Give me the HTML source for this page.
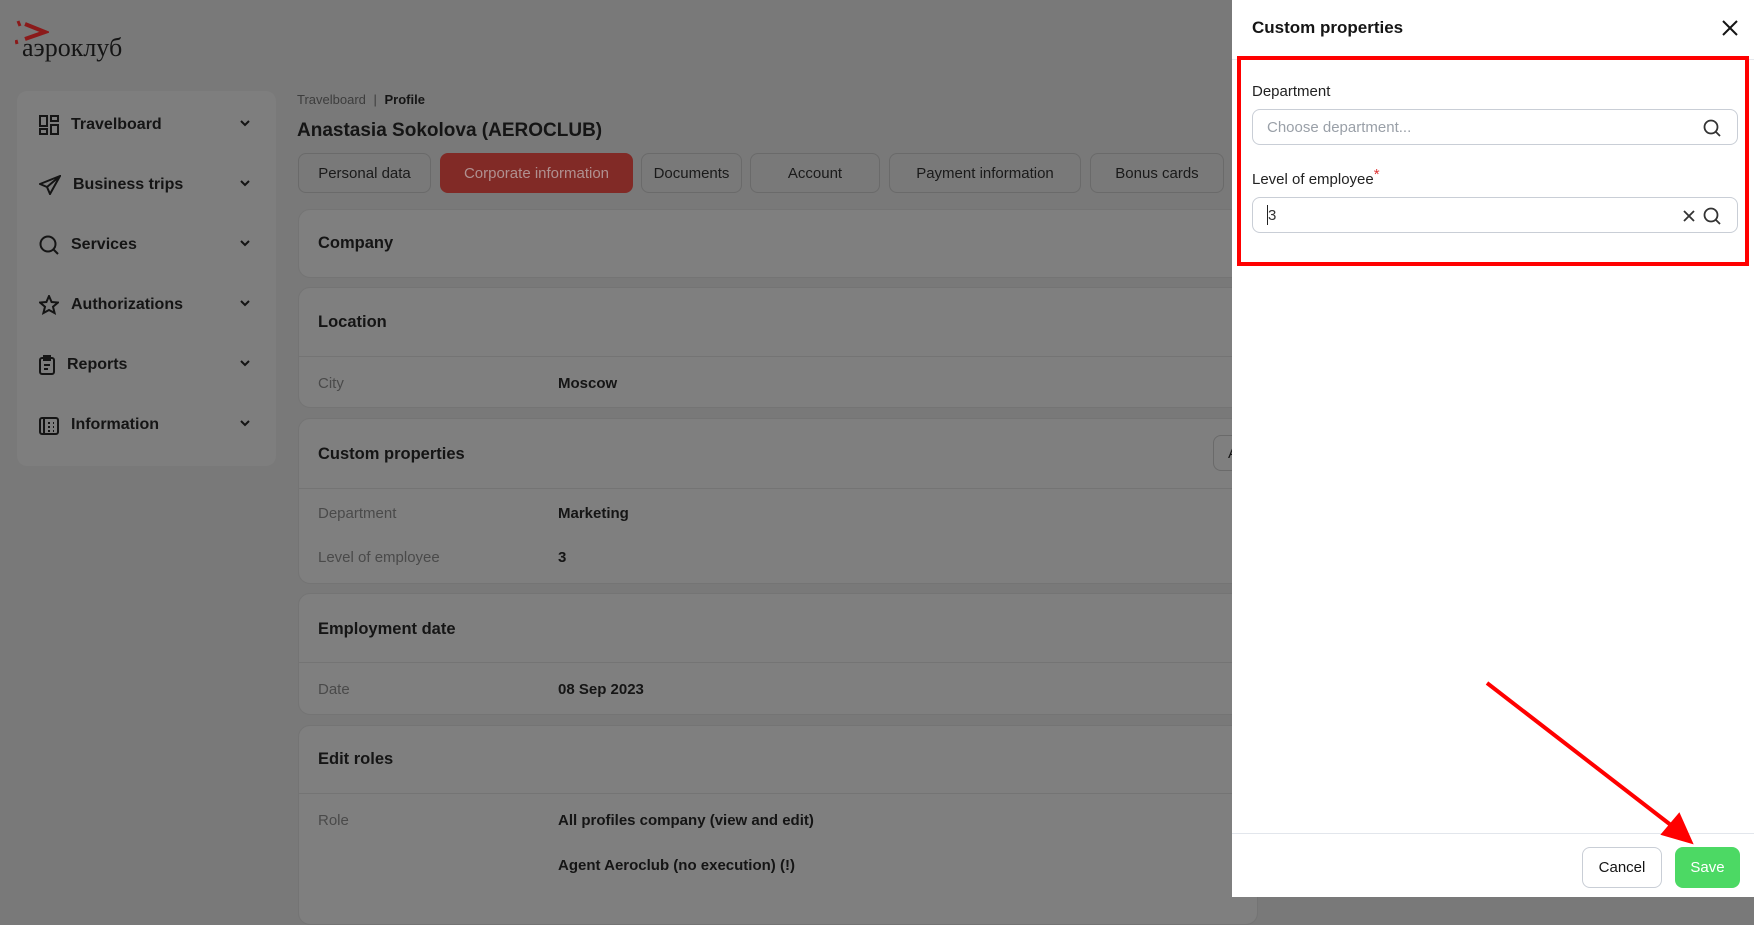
<!DOCTYPE html>
<html><head><meta charset="utf-8"><style>
*{box-sizing:border-box;margin:0;padding:0}
body{width:1754px;height:897px;overflow:hidden;background:#797979;font-family:"Liberation Sans",sans-serif;color:#151515;position:relative}
.abs{position:absolute}
.side{left:17px;top:91px;width:259px;height:375px;background:#7e7e7e;border-radius:10px}
.nav{position:absolute;left:22px;font-size:16px;font-weight:bold;display:flex;align-items:center;gap:9px;width:230px}
.nav .ch{position:absolute;left:200px;top:2px}
.tab{position:absolute;top:153px;height:40px;border:1px solid #6a6a6a;border-radius:8px;font-size:15px;display:flex;align-items:center;justify-content:center;color:#1a1a1a}
.card{position:absolute;left:298px;width:960px;background:#7f7f7f;border:1px solid #747474;border-radius:12px}
.ct{position:absolute;left:19px;font-size:16.5px;font-weight:bold}
.hr{position:absolute;left:0;right:0;height:1px;background:#747474}
.lab{position:absolute;left:19px;font-size:15px;color:#4a4a4a}
.val{position:absolute;left:259px;font-size:15px;font-weight:bold}
.panel{left:1232px;top:0;width:522px;height:897px;background:#fff}
.inp{position:absolute;left:20px;width:486px;height:36px;border:1px solid #c9ced6;border-radius:8px}
</style></head><body>
<svg class="abs" style="left:15px;top:18px" width="34" height="30" viewBox="0 0 34 30"><path d="M3 3 L5 8" stroke="#8b1a1a" stroke-width="3"/><path d="M1 22 L2 26" stroke="#8b1a1a" stroke-width="3"/><path d="M10 6 L30 14 L10 21" stroke="#8b1a1a" stroke-width="4" fill="none"/></svg>
<div class="abs" style="left:22px;top:33px;font-family:'Liberation Serif',serif;font-size:26px;color:#151515">аэроклуб</div>

<div class="abs side"></div>
<div class="abs" style="left:17px;top:91px">
<div class="nav" style="top:24px"><svg width="20" height="20" viewBox="0 0 20 20" fill="none" stroke="#151515" stroke-width="2"><rect x="1" y="1" width="7" height="10"/><rect x="12" y="1" width="7" height="5"/><rect x="1" y="14" width="7" height="5"/><rect x="12" y="10" width="7" height="9"/></svg><span style="margin-left:3px">Travelboard</span><svg class="ch" width="12" height="12" viewBox="0 0 12 12"><path d="M2 4l4 4 4-4" stroke="#151515" stroke-width="2" fill="none"/></svg></div>
<div class="nav" style="top:84px"><svg width="22" height="20" viewBox="0 0 22 20" fill="none" stroke="#151515" stroke-width="2"><path d="M21 1L1 9l7 3 3 7z M8 12L21 1"/></svg><span style="margin-left:3px">Business trips</span><svg class="ch" width="12" height="12" viewBox="0 0 12 12"><path d="M2 4l4 4 4-4" stroke="#151515" stroke-width="2" fill="none"/></svg></div>
<div class="nav" style="top:144px"><svg width="20" height="20" viewBox="0 0 20 20" fill="none" stroke="#151515" stroke-width="2"><circle cx="9" cy="9" r="7.5"/><path d="M14.5 14.5L19 19"/></svg><span style="margin-left:3px">Services</span><svg class="ch" width="12" height="12" viewBox="0 0 12 12"><path d="M2 4l4 4 4-4" stroke="#151515" stroke-width="2" fill="none"/></svg></div>
<div class="nav" style="top:204px"><svg width="20" height="20" viewBox="0 0 20 20" fill="none" stroke="#151515" stroke-width="2"><path d="M10 1l2.6 6 6.4.5-5 4.2 1.6 6.3L10 15l-5.6 3 1.6-6.3-5-4.2 6.4-.5z"/></svg><span style="margin-left:3px">Authorizations</span><svg class="ch" width="12" height="12" viewBox="0 0 12 12"><path d="M2 4l4 4 4-4" stroke="#151515" stroke-width="2" fill="none"/></svg></div>
<div class="nav" style="top:264px"><svg width="16" height="20" viewBox="0 0 16 20" fill="none" stroke="#151515" stroke-width="2"><rect x="1" y="3" width="14" height="16" rx="2"/><rect x="5" y="1" width="6" height="4"/><path d="M5 10h6M5 14h4"/></svg><span style="margin-left:3px">Reports</span><svg class="ch" width="12" height="12" viewBox="0 0 12 12"><path d="M2 4l4 4 4-4" stroke="#151515" stroke-width="2" fill="none"/></svg></div>
<div class="nav" style="top:324px"><svg width="20" height="20" viewBox="0 0 20 20" fill="none" stroke="#151515" stroke-width="2"><rect x="1" y="3" width="18" height="16" rx="2"/><path d="M5 3v16M9 8h2M14 8h1M9 12h2M14 12h1M9 16h2M14 16h1"/></svg><span style="margin-left:3px">Information</span><svg class="ch" width="12" height="12" viewBox="0 0 12 12"><path d="M2 4l4 4 4-4" stroke="#151515" stroke-width="2" fill="none"/></svg></div>
</div>

<div class="abs" style="left:297px;top:92px;font-size:13px;color:#3d3d3d">Travelboard <span style="margin:0 4px">|</span> <b style="color:#151515">Profile</b></div>
<div class="abs" style="left:297px;top:120px;font-size:19px;font-weight:bold">Anastasia Sokolova (AEROCLUB)</div>

<div class="tab" style="left:298px;width:133px">Personal data</div>
<div class="tab" style="left:440px;width:193px;background:#812a26;border-color:#812a26;color:#b09090">Corporate information</div>
<div class="tab" style="left:641px;width:101px">Documents</div>
<div class="tab" style="left:750px;width:130px">Account</div>
<div class="tab" style="left:889px;width:192px">Payment information</div>
<div class="tab" style="left:1090px;width:134px">Bonus cards</div>

<div class="card" style="top:209px;height:69px"><div class="ct" style="top:24px">Company</div></div>
<div class="card" style="top:287px;height:121px"><div class="ct" style="top:25px">Location</div><div class="hr" style="top:68px"></div><div class="lab" style="top:87px">City</div><div class="val" style="top:87px">Moscow</div></div>
<div class="card" style="top:418px;height:166px"><div class="ct" style="top:26px">Custom properties</div><div style="position:absolute;left:914px;top:16px;width:60px;height:36px;border:1px solid #6a6a6a;border-radius:8px;font-size:15px;padding:9px 14px">A</div><div class="hr" style="top:69px"></div><div class="lab" style="top:86px">Department</div><div class="val" style="top:86px">Marketing</div><div class="lab" style="top:130px">Level of employee</div><div class="val" style="top:130px">3</div></div>
<div class="card" style="top:593px;height:122px"><div class="ct" style="top:26px">Employment date</div><div class="hr" style="top:68px"></div><div class="lab" style="top:87px">Date</div><div class="val" style="top:87px">08 Sep 2023</div></div>
<div class="card" style="top:725px;height:200px"><div class="ct" style="top:24px">Edit roles</div><div class="hr" style="top:67px"></div><div class="lab" style="top:86px">Role</div><div class="val" style="top:86px">All profiles company (view and edit)</div><div class="val" style="top:131px">Agent Aeroclub (no execution) (!)</div></div>

<div class="abs panel">
<div class="abs" style="left:20px;top:18px;font-size:17px;font-weight:bold">Custom properties</div>
<svg class="abs" style="left:490px;top:20px" width="16" height="16" viewBox="0 0 16 16"><path d="M1 1L15 15M15 1L1 15" stroke="#151515" stroke-width="2"/></svg>
<div class="abs" style="left:0;right:0;top:59px;height:1px;background:#e6e9ee"></div>
<div class="abs" style="left:20px;top:83px;font-size:15px;color:#222">Department</div>
<div class="inp" style="top:109px"><span style="position:absolute;left:14px;top:9px;font-size:15px;color:#9aa0a8">Choose department...</span><svg style="position:absolute;right:16px;top:9px" width="18" height="18" viewBox="0 0 18 18" fill="none" stroke="#333" stroke-width="1.8"><circle cx="8" cy="8" r="6.5"/><path d="M13 13l4 4"/></svg></div>
<div class="abs" style="left:20px;top:171px;font-size:15px;color:#222">Level of employee<span style="color:#d33;position:relative;top:-5px">*</span></div>
<div class="inp" style="top:197px"><span style="position:absolute;left:14px;top:7px;width:1px;height:20px;background:#222"></span><span style="position:absolute;left:15px;top:9px;font-size:15px;color:#333">3</span><svg style="position:absolute;right:42px;top:12px" width="12" height="12" viewBox="0 0 12 12"><path d="M1 1l10 10M11 1L1 11" stroke="#333" stroke-width="1.8"/></svg><svg style="position:absolute;right:16px;top:9px" width="18" height="18" viewBox="0 0 18 18" fill="none" stroke="#333" stroke-width="1.8"><circle cx="8" cy="8" r="6.5"/><path d="M13 13l4 4"/></svg></div>
<div class="abs" style="left:5px;top:56px;width:512px;height:210px;border:4px solid #ff0000"></div>
<div class="abs" style="left:0;right:0;top:833px;height:1px;background:#e2e6ec"></div>
<div class="abs" style="left:350px;top:847px;width:80px;height:41px;border:1px solid #c9ced6;border-radius:8px;font-size:15px;display:flex;align-items:center;justify-content:center">Cancel</div>
<div class="abs" style="left:443px;top:847px;width:65px;height:41px;background:#4cd964;border-radius:8px;font-size:15px;color:#fff;display:flex;align-items:center;justify-content:center">Save</div>
</div>
<svg class="abs" style="left:0;top:0" width="1754" height="897"><path d="M1487 683L1676 829" stroke="#ff0000" stroke-width="4"/><path d="M1691 842L1663 834 1679 815z" fill="#ff0000" stroke="#ff0000" stroke-width="3"/></svg>
</body></html>
